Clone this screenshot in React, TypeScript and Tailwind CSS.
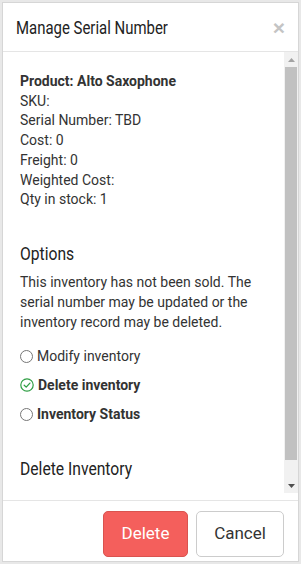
import React from 'react';

const heading = { fontFamily: 'Roboto, "Liberation Sans", Arial, sans-serif' };

const RadioOff = () => (
    <span className="inline-block w-[13px] h-[13px] rounded-full border border-[#767676] bg-white shrink-0" />
);

const RadioChecked = () => (
    <svg width="14" height="14" viewBox="0 0 14 14" className="shrink-0">
        <circle cx="7" cy="7" r="6.2" fill="none" stroke="#2f9e44" strokeWidth="1.2" />
        <path d="M4.2 7.2 L6.2 9.1 L9.9 5.1" fill="none" stroke="#2f9e44" strokeWidth="1.3" strokeLinecap="round" strokeLinejoin="round" />
    </svg>
);

const ScrollBar = () => (
    <div className="w-[14px] flex flex-col bg-[#f1f1f1] shrink-0">
        <div className="h-[15px] flex items-center justify-center">
            <svg width="7" height="4" viewBox="0 0 7 4"><path d="M0 4 L3.5 0 L7 4 Z" fill="#a3a3a3" /></svg>
        </div>
        <div className="flex-1 flex flex-col px-[1px]">
            <div className="h-[393px] bg-[#c1c1c1]" />
        </div>
        <div className="h-[15px] flex items-center justify-center">
            <svg width="7" height="4" viewBox="0 0 7 4"><path d="M0 0 L3.5 4 L7 0 Z" fill="#505050" /></svg>
        </div>
    </div>
);

export default function App() {
    return (
        <div className="w-[301px] h-[564px] bg-[#e8e8e8] p-[2px]" style={{ fontFamily: 'Roboto, "Liberation Sans", sans-serif' }}>
            <div className="h-full bg-white border border-[#d6d6d6] flex flex-col text-[#333]">
                {/* header */}
                <div className="h-[49px] flex items-center justify-between pl-[13px] pr-[13px] border-b border-[#e5e5e5] shrink-0">
                    <h4 className="[transform-origin:left_center] [transform:scaleX(0.83)] text-[18px] text-[#222] whitespace-nowrap" style={heading}>
                        Manage Serial Number
                    </h4>
                    <span className="text-[21px] leading-none font-bold text-[#c4c4c4]" style={{ fontFamily: '"Liberation Sans", Arial, sans-serif' }}>×</span>
                </div>

                {/* body */}
                <div className="flex h-[441px] shrink-0">
                    <div className="flex-1 overflow-hidden pl-[17px] pr-[10px] pt-[20px]">
                        <div className="text-[14px] leading-[19.7px]">
                            <div className="font-bold">Product: Alto Saxophone</div>
                            <div>SKU:</div>
                            <div>Serial Number: TBD</div>
                            <div>Cost: 0</div>
                            <div>Freight: 0</div>
                            <div>Weighted Cost:</div>
                            <div>Qty in stock: 1</div>
                        </div>

                        <h4 className="mt-[32px] [transform-origin:left_center] [transform:scaleX(0.87)] text-[18px] leading-[24px] text-[#222]" style={heading}>Options</h4>
                        <p className="mt-[6px] text-[14px] leading-[20px]">
                            This inventory has not been sold. The serial number may be updated or the inventory record may be deleted.
                        </p>

                        <div className="mt-[11px] text-[14px]">
                            <label className="h-[28px] flex items-center gap-[4px]">
                                <RadioOff />
                                <span>Modify inventory</span>
                            </label>
                            <label className="h-[29px] flex items-center gap-[4px] font-bold">
                                <RadioChecked />
                                <span>Delete inventory</span>
                            </label>
                            <label className="h-[30px] flex items-center gap-[4px] font-bold">
                                <RadioOff />
                                <span>Inventory Status</span>
                            </label>
                        </div>

                        <h4 className="mt-[27px] [transform-origin:left_center] [transform:scaleX(0.87)] text-[18px] leading-[24px] text-[#222]" style={heading}>Delete Inventory</h4>
                    </div>
                    <ScrollBar />
                </div>

                {/* footer */}
                <div className="flex-1 border-t border-[#e5e5e5] mt-[7px] flex justify-end items-start gap-[8px] pt-[10px] pr-[14px]">
                    <button className="w-[85px] h-[46px] rounded-[5px] bg-[#f45f5c] border border-[#d9534f] text-white text-[17px]">
                        Delete
                    </button>
                    <button className="w-[88px] h-[46px] rounded-[5px] bg-white border border-[#cccccc] text-[#333] text-[17px]">
                        Cancel
                    </button>
                </div>
            </div>
        </div>
    );
}
